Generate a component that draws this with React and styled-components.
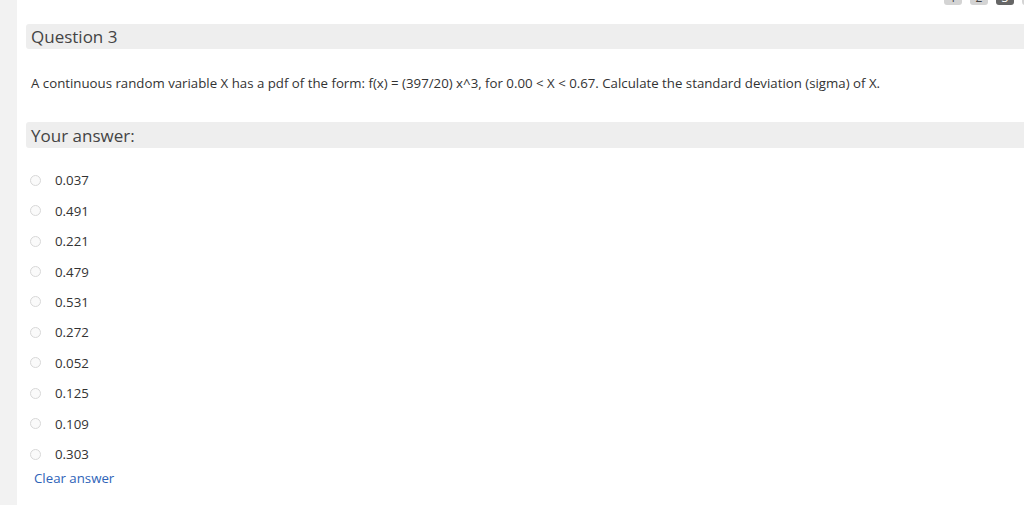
import styled, { createGlobalStyle } from 'styled-components';

const GlobalStyle = createGlobalStyle`
  html, body {
    margin: 0;
    padding: 0;
    background: #ffffff;
    font-family: "Open Sans", "Liberation Sans", sans-serif;
    color: #333333;
  }
`;

const answers = ['0.037', '0.491', '0.221', '0.479', '0.531', '0.272', '0.052', '0.125', '0.109', '0.303'];

const Page = styled.div`
  display: flex;
  height: 505px;
  overflow: hidden;
`;

const SideStrip = styled.div`
  width: 17px;
  flex-shrink: 0;
  background: #f2f2f2;
`;

const Main = styled.main`
  flex: 1;
  position: relative;
  padding: 24px 0 0 9px;
`;

const Pager = styled.div`
  position: absolute;
  top: -13px;
  right: -16px;
  display: flex;
  gap: 8px;
`;

const PageButton = styled.span`
  width: 18px;
  height: 18px;
  border-radius: 3px;
  background: ${(p) => (p.$active ? '#666666' : '#d4d4d4')};
  color: ${(p) => (p.$active ? '#ffffff' : '#444444')};
  font-size: 12px;
  line-height: 21px;
  text-align: center;
  overflow: hidden;
`;

const SectionBar = styled.div`
  background: #eeeeee;
  border-radius: 3px 0 0 3px;
  height: ${(p) => p.$h}px;
  display: flex;
  align-items: center;
  padding-left: 5px;
  font-size: 17px;
  color: #444444;
`;

const QuestionText = styled.p`
  margin: 25px 0 0 5px;
  font-size: 13.25px;
  line-height: 18px;
  color: #333333;
`;

const AnswerBlock = styled.div`
  margin-top: 30px;
`;

const List = styled.div`
  display: flex;
  flex-direction: column;
  margin: 17px 0 -3px;
  padding-left: 4px;
`;

const Option = styled.label`
  display: flex;
  align-items: center;
  height: 30.45px;
  font-size: 13.25px;
  color: #333333;
`;

const Radio = styled.span`
  width: 9px;
  height: 9px;
  border-radius: 50%;
  border: 1px solid #d8d8d8;
  background: #fafafa;
  margin-right: 14px;
`;

const ClearLink = styled.a`
  display: inline-block;
  margin-left: 8px;
  font-size: 13.25px;
  color: #2e63b8;
  text-decoration: none;
`;

export default function App() {
  return (
    <>
      <GlobalStyle />
      <Page>
        <SideStrip />
        <Main>
          <Pager>
            <PageButton>1</PageButton>
            <PageButton>2</PageButton>
            <PageButton $active>3</PageButton>
            <PageButton>4</PageButton>
          </Pager>
          <SectionBar $h={25}>Question 3</SectionBar>
          <QuestionText>
            A continuous random variable X has a pdf of the form: f(x) = (397/20) x^3, for 0.00 &lt; X &lt; 0.67. Calculate the standard deviation (sigma) of X.
          </QuestionText>
          <AnswerBlock>
            <SectionBar $h={26}>Your answer:</SectionBar>
            <List>
              {answers.map((a) => (
                <Option key={a}>
                  <Radio />
                  {a}
                </Option>
              ))}
            </List>
            <ClearLink href="#">Clear answer</ClearLink>
          </AnswerBlock>
        </Main>
      </Page>
    </>
  );
}
